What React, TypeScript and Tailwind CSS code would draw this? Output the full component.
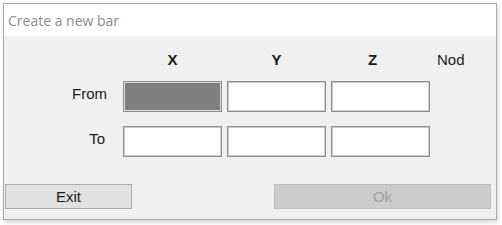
import React from "react";

const font = { fontFamily: '"Liberation Sans", Arial, sans-serif' };

function Field({ selected = false }: { selected?: boolean }) {
  return (
    <input
      readOnly
      className={`w-[99px] h-[31px] border border-[#8f8f8f] outline-none ${
        selected
          ? "bg-[#7f7f7f] shadow-[inset_0_0_0_1px_#dcdcdc]"
          : "bg-white shadow-[inset_0_0_0_1px_#c9c9c9]"
      }`}
    />
  );
}

export default function App() {
  return (
    <div className="w-[502px] h-[225px] bg-white pt-[3px] pl-[3px]" style={font}>
      <div className="w-[494px] h-[217px] border border-[#a9a9a9] bg-[#f0f0f0] flex flex-col shadow-[1px_2px_4px_rgba(0,0,0,0.18)]">
        {/* title */}
        <div className="h-[32px] bg-white flex items-center pl-[4px] pt-[2px]">
          <span
            className="text-[14px] text-[#8c8c8c] leading-none"
            style={{ fontFamily: '"Open Sans", "Noto Sans", sans-serif' }}
          >
            Create a new bar
          </span>
        </div>

        {/* column headers */}
        <div className="flex items-center h-[20px] mt-[14px] text-[15px] text-[#1a1a1a]">
          <div className="w-[119px]" />
          <div className="w-[99px] text-center font-bold">X</div>
          <div className="w-[99px] ml-[5px] text-center font-bold">Y</div>
          <div className="w-[99px] ml-[5px] text-center font-bold pr-[16px]">Z</div>
          <div className="ml-[7px]">Nod</div>
        </div>

        {/* from row */}
        <div className="flex items-center mt-[11px] gap-[5px]">
          <div className="w-[114px] text-right pr-[11px] text-[15px] text-[#1a1a1a] -mt-[4px]">From</div>
          <Field selected />
          <Field />
          <Field />
        </div>

        {/* to row */}
        <div className="flex items-center mt-[14px] gap-[5px]">
          <div className="w-[114px] text-right pr-[13px] text-[15px] text-[#1a1a1a] -mt-[4px]">To</div>
          <Field />
          <Field />
          <Field />
        </div>

        {/* buttons */}
        <div className="flex justify-between mt-[27px] pl-[1px] pr-[5px]">
          <button className="w-[127px] h-[25px] bg-[#e1e1e1] border border-[#adadad] text-[15px] text-[#1a1a1a] leading-none">
            Exit
          </button>
          <button
            disabled
            className="w-[217px] h-[25px] bg-[#cccccc] border border-[#bfbfbf] text-[15px] text-[#a0a0a0] leading-none"
          >
            Ok
          </button>
        </div>
      </div>
    </div>
  );
}
